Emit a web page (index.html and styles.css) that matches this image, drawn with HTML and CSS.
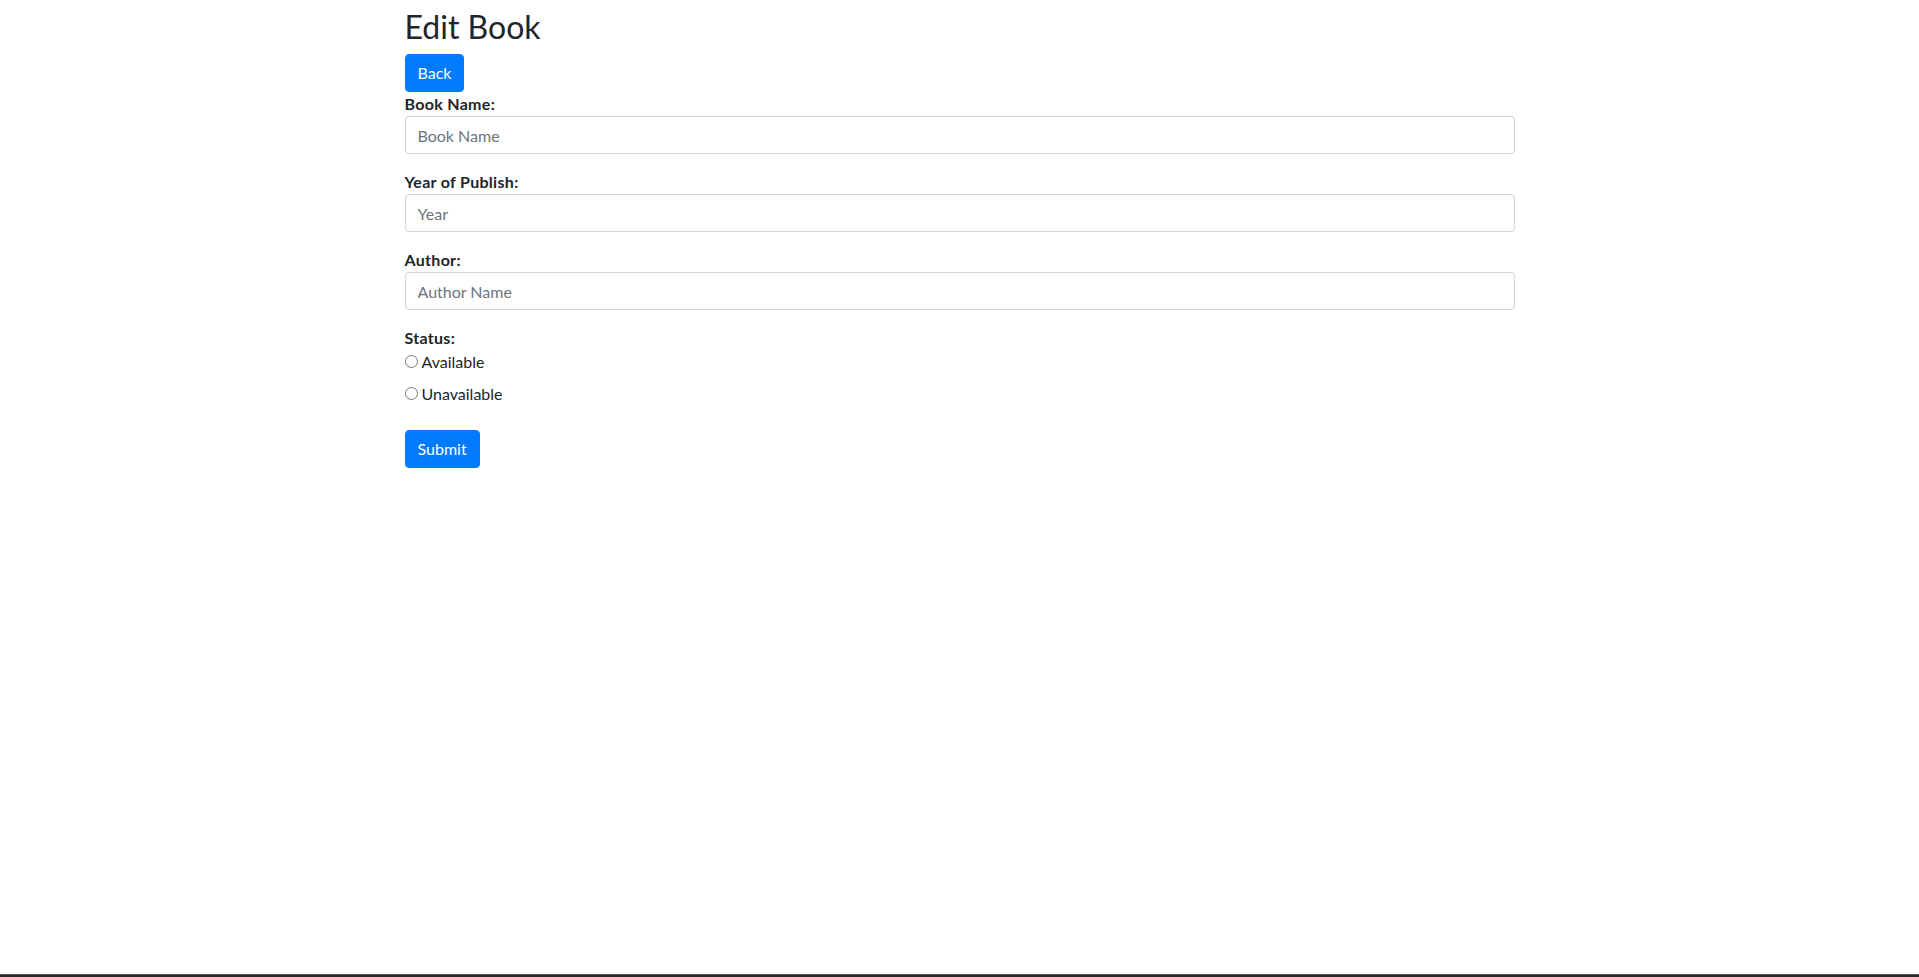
FILE: index.html
```html
<!DOCTYPE html>
<html lang="en">
<head>
<meta charset="utf-8">
<title>Edit Book</title>
<link rel="stylesheet" href="styles.css">
</head>
<body>
<div class="page">
  <main class="container">
    <h2 class="title">Edit Book</h2>
    <a class="btn btn-primary back-btn" href="#">Back</a>
    <form class="book-form">
      <div class="form-group">
        <label class="field-label" for="bookName">Book Name:</label>
        <input class="form-control" id="bookName" type="text" placeholder="Book Name">
      </div>
      <div class="form-group">
        <label class="field-label" for="year">Year of Publish:</label>
        <input class="form-control" id="year" type="text" placeholder="Year">
      </div>
      <div class="form-group">
        <label class="field-label" for="author">Author:</label>
        <input class="form-control" id="author" type="text" placeholder="Author Name">
      </div>
      <div class="form-group status-group">
        <label class="field-label">Status:</label>
        <div class="radio-list">
          <label class="radio-option"><input type="radio" name="status" value="available">Available</label>
          <label class="radio-option"><input type="radio" name="status" value="unavailable">Unavailable</label>
        </div>
      </div>
      <button class="btn btn-primary submit-btn" type="submit">Submit</button>
    </form>
  </main>
  <div class="bottom-bar"></div>
</div>
</body>
</html>
```
FILE: styles.css
```css
*, *::before, *::after { box-sizing: border-box; }

html, body {
  margin: 0;
  padding: 0;
}

body {
  font-family: Lato, "Noto Sans", sans-serif;
  font-size: 16px;
  line-height: 1.5;
  color: #212529;
  background: #fff;
}

.page {
  min-height: 100vh;
  display: flex;
  flex-direction: column;
}

.container {
  flex: 1;
  width: 100%;
  max-width: 1140px;
  margin: 0 auto;
  padding: 0 15px;
}

.title {
  margin: 8px 0 8px;
  font-size: 32px;
  font-weight: 400;
  line-height: 38px;
  color: #212529;
}

.btn {
  display: inline-block;
  font-family: inherit;
  font-size: 16px;
  font-weight: 400;
  line-height: 1.5;
  text-align: center;
  text-decoration: none;
  padding: 6px 12px;
  border: 1px solid transparent;
  border-radius: 4px;
  cursor: pointer;
}

.btn-primary {
  color: #fff;
  background-color: #007bff;
  border-color: #007bff;
}

.back-btn { vertical-align: top; }

.book-form { margin: 0; }

.form-group { margin-bottom: 16px; }

.status-group { margin-bottom: 24px; }

.field-label {
  display: block;
  margin: 0;
  font-weight: 700;
  letter-spacing: 0.3px;
}

.form-control {
  display: block;
  width: 100%;
  height: 38px;
  padding: 6px 12px;
  font-family: inherit;
  font-size: 16px;
  line-height: 1.5;
  color: #495057;
  background-color: #fff;
  border: 1px solid #ced4da;
  border-radius: 4px;
  outline: none;
}

.form-control::placeholder {
  color: #6c757d;
  opacity: 1;
}

.radio-list {
  display: flex;
  flex-direction: column;
  gap: 8px;
}

.radio-option {
  display: block;
  margin: 0;
}

.radio-option input {
  width: 13px;
  height: 13px;
  margin: 3px 4px 0 0;
}

.submit-btn { margin: 0; }

.bottom-bar {
  height: 3px;
  background: #2b2b2b;
  border-top: 1px solid #555;
}
```
